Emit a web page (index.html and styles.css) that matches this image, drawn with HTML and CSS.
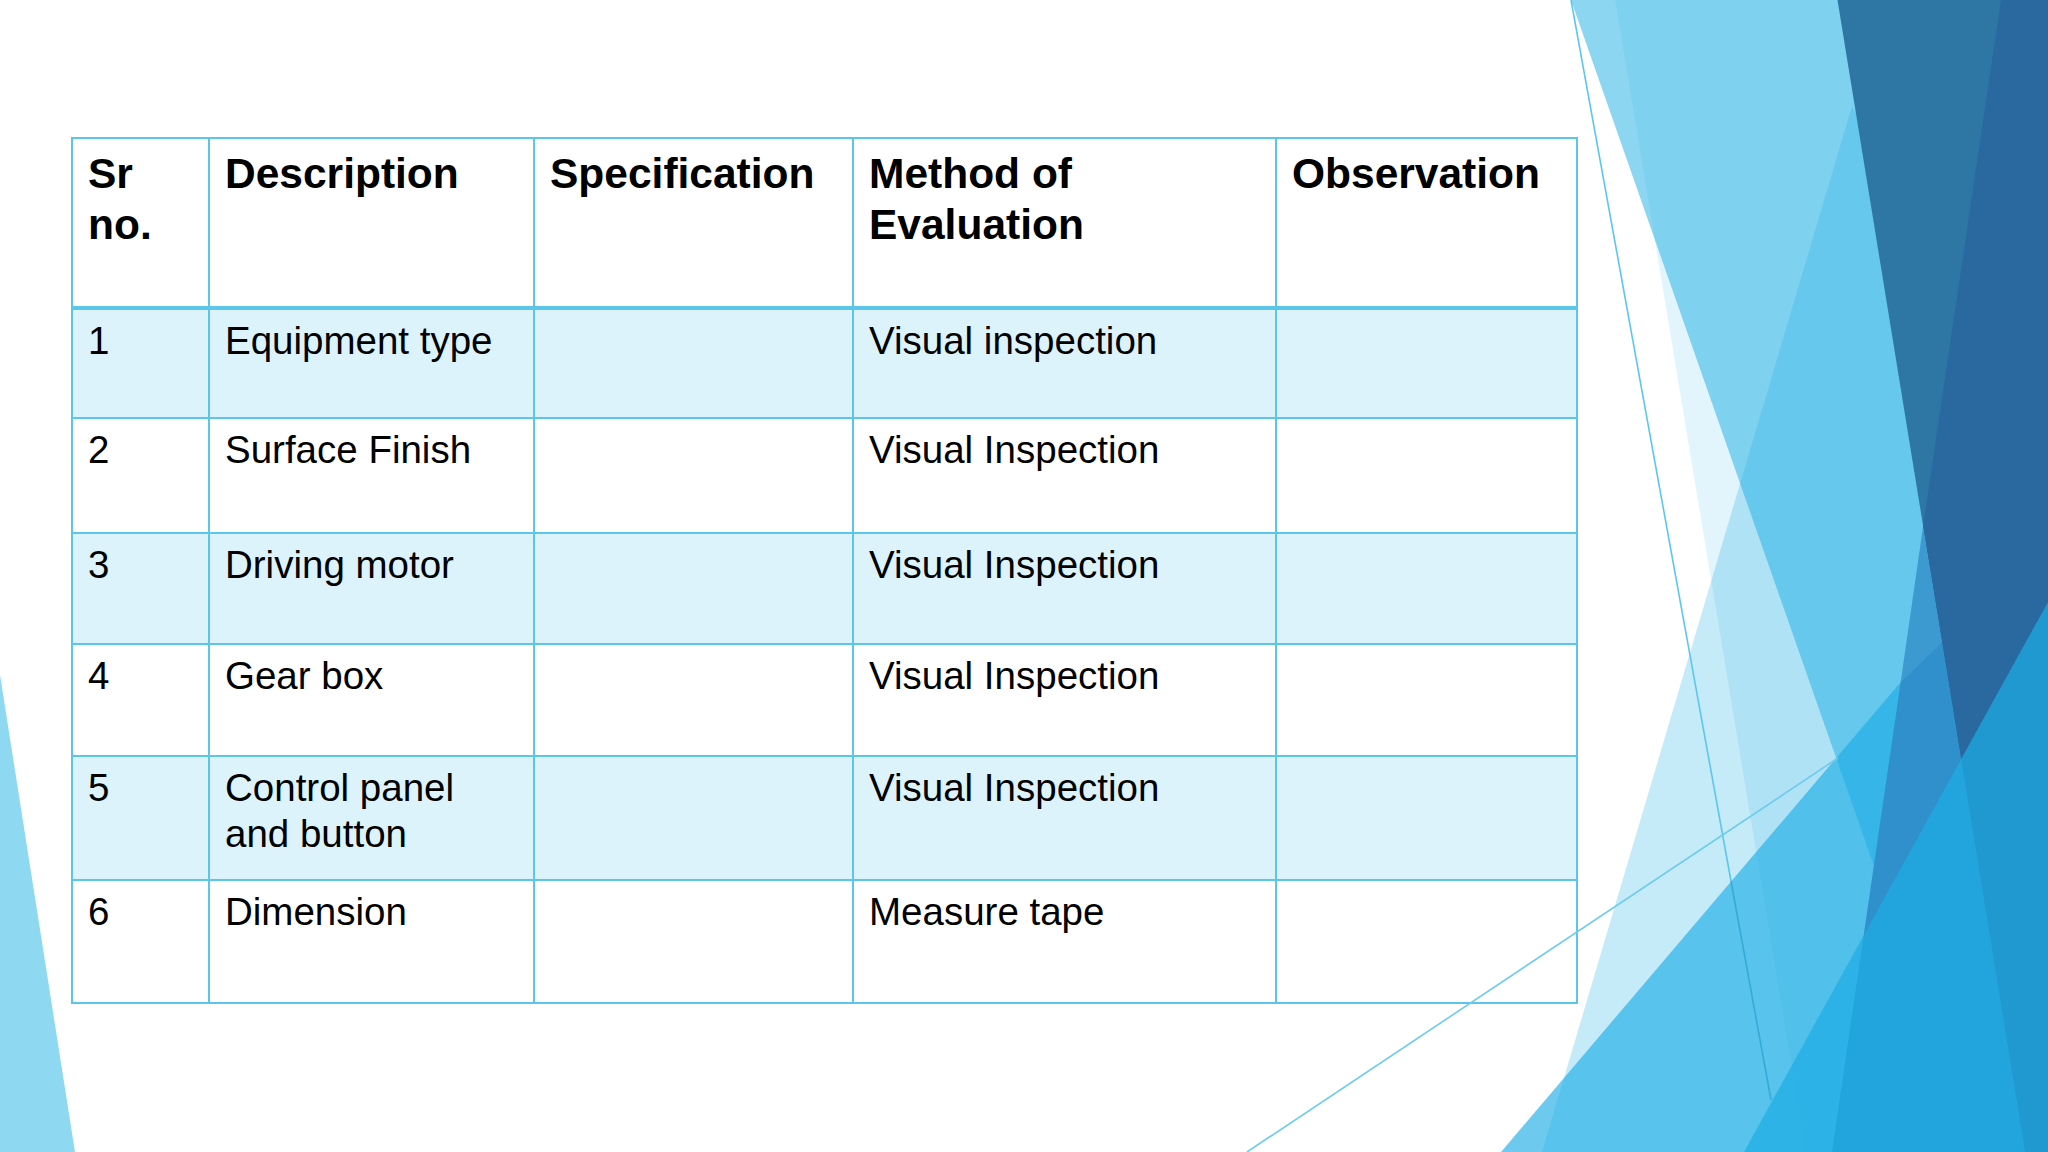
FILE: index.html
```html
<!DOCTYPE html>
<html lang="en">
<head>
<meta charset="utf-8">
<title>Inspection table</title>
<link rel="stylesheet" href="styles.css">
</head>
<body>
<div class="slide">
  <svg class="deco" viewBox="0 0 2048 1152" preserveAspectRatio="none" aria-hidden="true">
    <polygon points="0,675 75,1152 0,1152" fill="#8ed8f2"/>
    <polygon points="1615,0 2048,0 2048,1152 1806,1152" fill="#1cade4" fill-opacity="0.12"/>
    <polygon points="1852,106 2048,500 2048,1152 1542,1152" fill="#1cade4" fill-opacity="0.255"/>
    <polygon points="1571,0 2048,0 2048,1152 1974,1152" fill="#1cade4" fill-opacity="0.5"/>
    <polygon points="1501,1152 2048,509 2048,1152" fill="#1cade4" fill-opacity="0.644"/>
    <line x1="1571" y1="0" x2="1731" y2="881" stroke="#5cc6ec" stroke-width="1.6"/>
    <line x1="1731" y1="881" x2="1771" y2="1100" stroke="#34aad9" stroke-width="1.6"/>
    <polygon points="1837.5,0 2048,0 2048,1152 2025,1152" fill="#2e76a4"/>
    <polygon points="2001,0 2048,0 2048,1152 2025,1152 1923,527" fill="#2969a0"/>
    <polygon points="1923,527 1942,642 1900.7,682" fill="#3d9ad0"/>
    <polygon points="1900.7,682 1942,642 2025,1152 1832,1152" fill="#3090cc"/>
    <polygon points="2048,602 1744,1152 2048,1152" fill="#1cade4" fill-opacity="0.7"/>
  </svg>

  <main class="content">
    <table class="grid">
      <colgroup>
        <col class="c-sr">
        <col class="c-desc">
        <col class="c-spec">
        <col class="c-meth">
        <col class="c-obs">
      </colgroup>
      <thead>
        <tr class="r-head">
          <th>Sr no.</th>
          <th>Description</th>
          <th>Specification</th>
          <th>Method of Evaluation</th>
          <th>Observation</th>
        </tr>
      </thead>
      <tbody>
        <tr class="r1 tint">
          <td>1</td><td>Equipment type</td><td></td><td>Visual inspection</td><td></td>
        </tr>
        <tr class="r2">
          <td>2</td><td>Surface Finish</td><td></td><td>Visual Inspection</td><td></td>
        </tr>
        <tr class="r3 tint">
          <td>3</td><td>Driving motor</td><td></td><td>Visual Inspection</td><td></td>
        </tr>
        <tr class="r4">
          <td>4</td><td>Gear box</td><td></td><td>Visual Inspection</td><td></td>
        </tr>
        <tr class="r5 tint">
          <td>5</td><td>Control panel and button</td><td></td><td>Visual Inspection</td><td></td>
        </tr>
        <tr class="r6">
          <td>6</td><td>Dimension</td><td></td><td>Measure tape</td><td></td>
        </tr>
      </tbody>
    </table>
  </main>

  <svg class="overlay" viewBox="0 0 2048 1152" preserveAspectRatio="none" aria-hidden="true">
    <line x1="1247" y1="1152" x2="1838" y2="758" stroke="#6ccbee" stroke-width="1.6"/>
  </svg>
</div>
</body>
</html>
```

FILE: styles.css
```css
html, body {
  margin: 0;
  padding: 0;
  background: #ffffff;
}

.slide {
  position: relative;
  width: 2048px;
  height: 1152px;
  overflow: hidden;
  background: #ffffff;
  font-family: "Liberation Sans", Arial, sans-serif;
  color: #000000;
}

.deco,
.overlay {
  position: absolute;
  left: 0;
  top: 0;
  width: 2048px;
  height: 1152px;
  display: block;
  pointer-events: none;
}

.deco { z-index: 0; }
.overlay { z-index: 2; }

.content {
  position: relative;
  z-index: 1;
  padding: 137px 0 0 71px;
}

.grid {
  border-collapse: collapse;
  table-layout: fixed;
  width: 1505px;
}

.c-sr { width: 137px; }
.c-desc { width: 325px; }
.c-spec { width: 319px; }
.c-meth { width: 423px; }
.c-obs { width: 301px; }

.grid th,
.grid td {
  border: 2px solid #5bc5ea;
  text-align: left;
  vertical-align: top;
  padding: 8px 16px 0 15px;
  box-sizing: border-box;
}

.grid th {
  font-weight: 700;
  font-size: 42.5px;
  line-height: 51px;
  background: #ffffff;
  border-bottom-width: 4px;
  padding-top: 9px;
}

.grid td {
  font-size: 38.5px;
  line-height: 46px;
  background: #ffffff;
}

.grid tr.tint td {
  background: #ddf3fb;
}

.grid tr.r6 td {
  background: transparent;
}

.r-head { height: 170px; }
.r1 { height: 110px; }
.r2 { height: 115px; }
.r3 { height: 111px; }
.r4 { height: 112px; }
.r5 { height: 124px; }
.r6 { height: 123px; }
```
